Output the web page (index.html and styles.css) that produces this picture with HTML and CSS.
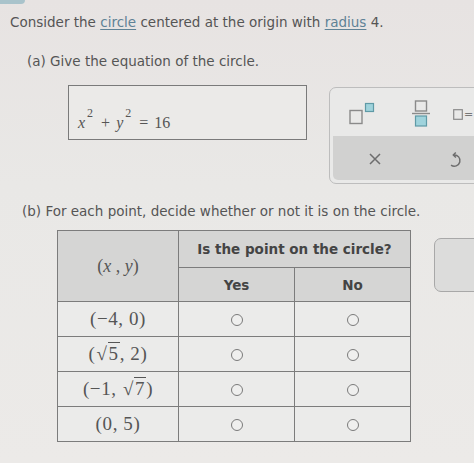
FILE: index.html
```html
<!DOCTYPE html>
<html>
<head>
<meta charset="utf-8">
<link rel="stylesheet" href="styles.css">
</head>
<body>
<div class="page">
  <div class="tab"></div>
  <p class="intro">Consider the <span class="link">circle</span> centered at the origin with <span class="link">radius</span> 4.</p>
  <p class="part part-a">(a) Give the equation of the circle.</p>
  <div class="row-a">
    <div class="answer">
      <span class="math"><i>x</i><sup>2</sup><span class="op">+</span><i>y</i><sup>2</sup><span class="op">=</span>16</span>
    </div>
    <div class="toolbar">
      <div class="tools">
        <svg class="ic-sup" width="26" height="24" viewBox="0 0 26 24">
          <rect x="1" y="8.5" width="12" height="13" fill="none" stroke="#8a8a8a" stroke-width="1.4"/>
          <rect x="16.5" y="1.5" width="8" height="8" fill="#9fd3dc" stroke="#5f9aa6" stroke-width="1.2"/>
        </svg>
        <svg class="ic-frac" width="18" height="27" viewBox="0 0 18 27">
          <rect x="3.5" y="1" width="11" height="10" fill="none" stroke="#8a8a8a" stroke-width="1.4"/>
          <line x1="0" y1="13.5" x2="18" y2="13.5" stroke="#8a8a8a" stroke-width="1.4"/>
          <rect x="3.5" y="16" width="11" height="10" fill="#9fd3dc" stroke="#5f9aa6" stroke-width="1.2"/>
        </svg>
        <span class="ic-eq"><svg width="10" height="11" viewBox="0 0 10 11"><rect x="0.7" y="0.7" width="8.6" height="9.6" fill="none" stroke="#8a8a8a" stroke-width="1.2"/></svg>=</span>
      </div>
      <div class="actions">
        <svg class="ic-x" width="14" height="14" viewBox="0 0 14 14">
          <path d="M2 2 L12 12 M12 2 L2 12" stroke="#6d6d6d" stroke-width="1.5" fill="none"/>
        </svg>
        <svg class="ic-undo" width="16" height="18" viewBox="0 0 14 16">
          <path d="M5 3.5 A5 5 0 1 1 2.6 12.5" stroke="#6d6d6d" stroke-width="1.3" fill="none"/>
          <path d="M6.8 1.3 L4.6 3.6 L6.9 5.8" stroke="#6d6d6d" stroke-width="1.3" fill="none"/>
        </svg>
      </div>
    </div>
  </div>
  <p class="part part-b">(b) For each point, decide whether or not it is on the circle.</p>
  <div class="row-b">
    <table class="grid">
      <tr class="h1">
        <th rowspan="2" class="xy"><span class="math">(<i>x</i> , <i>y</i>)</span></th>
        <th colspan="2">Is the point on the circle?</th>
      </tr>
      <tr class="h2">
        <th>Yes</th>
        <th>No</th>
      </tr>
      <tr>
        <td class="pt"><span class="math">(−4, 0)</span></td>
        <td><span class="radio"></span></td>
        <td><span class="radio"></span></td>
      </tr>
      <tr>
        <td class="pt"><span class="math">(<span class="sqrt">√</span><span class="rad">5</span>, 2)</span></td>
        <td><span class="radio"></span></td>
        <td><span class="radio"></span></td>
      </tr>
      <tr>
        <td class="pt"><span class="math">(−1, <span class="sqrt">√</span><span class="rad">7</span>)</span></td>
        <td><span class="radio"></span></td>
        <td><span class="radio"></span></td>
      </tr>
      <tr>
        <td class="pt"><span class="math">(0, 5)</span></td>
        <td><span class="radio"></span></td>
        <td><span class="radio"></span></td>
      </tr>
    </table>
    <div class="side-btn"></div>
  </div>
</div>
</body>
</html>
```

FILE: styles.css
```css
html, body {
  margin: 0;
  padding: 0;
  overflow: hidden;
  background: #e8e6e4;
}
.page {
  width: 474px;
  height: 463px;
  overflow: hidden;
  font-family: "DejaVu Sans", Verdana, sans-serif;
  font-size: 13.5px;
  color: #555;
  background: linear-gradient(180deg, #e7e3e2 0%, #e9e8e6 40%, #eceae8 100%);
}
.tab {
  width: 25px;
  height: 4px;
  background: #a9c3cb;
  border-bottom-right-radius: 4px;
}
p {
  margin: 0;
  line-height: 16px;
  white-space: nowrap;
}
.intro {
  margin-top: 10px;
  padding-left: 10px;
}
.link {
  color: #5f8296;
  text-decoration: underline;
  text-underline-offset: 2px;
}
.part-a {
  margin-top: 23px;
  padding-left: 27px;
}
.row-a {
  display: flex;
  align-items: flex-start;
  margin-top: 16px;
}
.answer {
  margin-left: 68px;
  width: 239px;
  height: 55px;
  flex: none;
  border: 1.5px solid #7a7a7a;
  background: #ebeae8;
  display: flex;
  align-items: center;
  padding-left: 9px;
  box-sizing: border-box;
}
.math {
  font-family: "Liberation Serif", "Times New Roman", serif;
  font-size: 16px;
  color: #555;
}
.answer .math {
  margin-top: 12px;
}
.math sup {
  font-size: 12px;
  vertical-align: 11px;
  margin-left: 2px;
  margin-right: 2px;
}
.op {
  margin: 0 6px;
}
.toolbar {
  margin-left: 22px;
  margin-top: 2px;
  width: 170px;
  height: 97px;
  flex: none;
  box-sizing: border-box;
  border: 1px solid #bdbdbd;
  border-radius: 7px;
  background: #e9e9e8;
  padding: 0 0 3px 3px;
  display: flex;
  flex-direction: column;
}
.tools {
  height: 48px;
  display: flex;
  align-items: center;
  padding-left: 16px;
}
.ic-sup { margin-top: 4px; }
.ic-frac { margin-left: 37px; margin-top: 2px; }
.ic-eq {
  margin-left: 23px;
  display: flex;
  align-items: center;
  gap: 1px;
  font-size: 11px;
  color: #777;
  margin-top: 4px;
}
.actions {
  flex: 1;
  background: #d1d1d0;
  border-bottom-left-radius: 5px;
  display: flex;
  align-items: center;
  padding-left: 35px;
}
.ic-x { margin-top: 2px; }
.ic-undo { margin-left: 66px; margin-top: 4px; }
.part-b {
  margin-top: 19px;
  padding-left: 22px;
}
.row-b {
  display: flex;
  align-items: flex-start;
  margin-top: 11px;
}
.grid {
  margin-left: 57px;
  border-collapse: collapse;
  border: 1.5px solid #777;
  flex: none;
}
.grid th, .grid td {
  border: 1.2px solid #7c7c7c;
  padding: 0;
  text-align: center;
}
.grid th {
  background: #d5d5d4;
  color: #444;
  font-weight: bold;
  font-size: 13.5px;
}
.grid th.xy {
  width: 120px;
  font-weight: normal;
}
.grid th.xy .math { font-size: 18px; color: #555; }
.h1 th { height: 36px; }
.h2 th { height: 33px; width: 115px; }
.grid td {
  background: #ebebea;
  height: 34px;
}
.grid td.pt .math { font-size: 19px; letter-spacing: 0.6px; }
.sqrt { margin-left: 1px; }
.rad {
  border-top: 1px solid #555;
  padding: 0 1px;
}
.radio {
  display: inline-block;
  width: 10px;
  height: 10px;
  border: 1.4px solid #7a7a7a;
  border-radius: 50%;
  vertical-align: middle;
  background: #efefee;
}
.side-btn {
  margin-left: 23px;
  margin-top: 8px;
  width: 52px;
  height: 54px;
  flex: none;
  box-sizing: border-box;
  border: 1.2px solid #a8a8a8;
  border-radius: 7px;
  background: #dcdcdb;
}
```
